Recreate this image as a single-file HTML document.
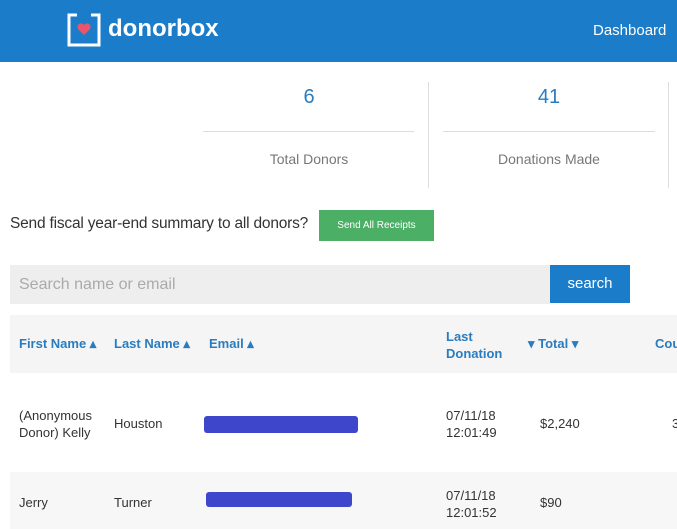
<!DOCTYPE html>
<html><head><style>
body{margin:0;width:677px;height:529px;overflow:hidden;background:#fff;font-family:"Liberation Sans",sans-serif;position:relative}
.a{position:absolute}
.hd{left:0;top:0;width:677px;height:62px;background:#1b7dc9}
.t{color:#333;font-size:13px}
.h{color:#2a7cbf;font-weight:bold;font-size:13px}
.num{color:#2a7cbf;font-size:20px;text-align:center;width:212px}
.lab{color:#777;font-size:14px;text-align:center;width:212px}
.red{background:#3e46cc;height:17px;border-radius:3px}
</style></head><body>
<div class="a hd"></div>
<svg class="a" style="left:67px;top:13px" width="35" height="34" viewBox="0 0 35 34"><path d="M10 2H2V32H32V2H24" fill="none" stroke="#fff" stroke-width="3"/><path d="M17 22L11 16A3.3 3.3 0 0 1 17 12A3.3 3.3 0 0 1 23 16Z" fill="#e8566b"/></svg>
<div class="a" style="left:108px;top:15px;color:#fff;font-size:24px;font-weight:bold">donorbox</div>
<div class="a" style="left:593px;top:22px;color:#fff;font-size:15px">Dashboard</div>

<div class="a num" style="left:203px;top:86px">6</div>
<div class="a" style="left:203px;top:131px;width:211px;height:1px;background:#ddd"></div>
<div class="a lab" style="left:203px;top:151px">Total Donors</div>
<div class="a" style="left:428px;top:82px;width:1px;height:106px;background:#ddd"></div>
<div class="a num" style="left:443px;top:86px">41</div>
<div class="a" style="left:443px;top:131px;width:212px;height:1px;background:#ddd"></div>
<div class="a lab" style="left:443px;top:151px">Donations Made</div>
<div class="a" style="left:668px;top:82px;width:1px;height:106px;background:#ddd"></div>

<div class="a" style="left:10px;top:215px;font-size:15.5px;color:#333;letter-spacing:-0.2px">Send fiscal year-end summary to all donors?</div>
<div class="a" style="left:319px;top:210px;width:115px;height:31px;background:#4caf66;color:#fff;font-size:10px;text-align:center;line-height:31px">Send All Receipts</div>

<div class="a" style="left:10px;top:265px;width:540px;height:39px;background:#eee"></div>
<div class="a" style="left:19px;top:276px;color:#aaa;font-size:16px">Search name or email</div>
<div class="a" style="left:550px;top:265px;width:80px;height:38px;background:#1b7dc9;color:#fff;font-size:15px;text-align:center;line-height:37px">search</div>

<div class="a" style="left:10px;top:315px;width:667px;height:58px;background:#f5f5f5"></div>
<div class="a h" style="left:19px;top:336px">First Name ▴</div>
<div class="a h" style="left:114px;top:336px">Last Name ▴</div>
<div class="a h" style="left:209px;top:336px">Email ▴</div>
<div class="a h" style="left:446px;top:328px;line-height:17px">Last<br>Donation</div>
<div class="a h" style="left:528px;top:336px">▾ Total ▾</div>
<div class="a h" style="left:655px;top:336px">Cou</div>

<div class="a t" style="left:19px;top:407px;line-height:17px">(Anonymous<br>Donor) Kelly</div>
<div class="a t" style="left:114px;top:416px">Houston</div>
<div class="a red" style="left:204px;top:416px;width:154px"></div>
<div class="a t" style="left:446px;top:407px;line-height:17px">07/11/18<br>12:01:49</div>
<div class="a t" style="left:540px;top:416px">$2,240</div>
<div class="a t" style="left:672px;top:416px">3</div>

<div class="a" style="left:10px;top:472px;width:667px;height:57px;background:#f7f7f7"></div>
<div class="a t" style="left:19px;top:495px">Jerry</div>
<div class="a t" style="left:114px;top:495px">Turner</div>
<div class="a red" style="left:206px;top:492px;width:146px;height:15px"></div>
<div class="a t" style="left:446px;top:487px;line-height:17px">07/11/18<br>12:01:52</div>
<div class="a t" style="left:540px;top:495px">$90</div>
</body></html>
